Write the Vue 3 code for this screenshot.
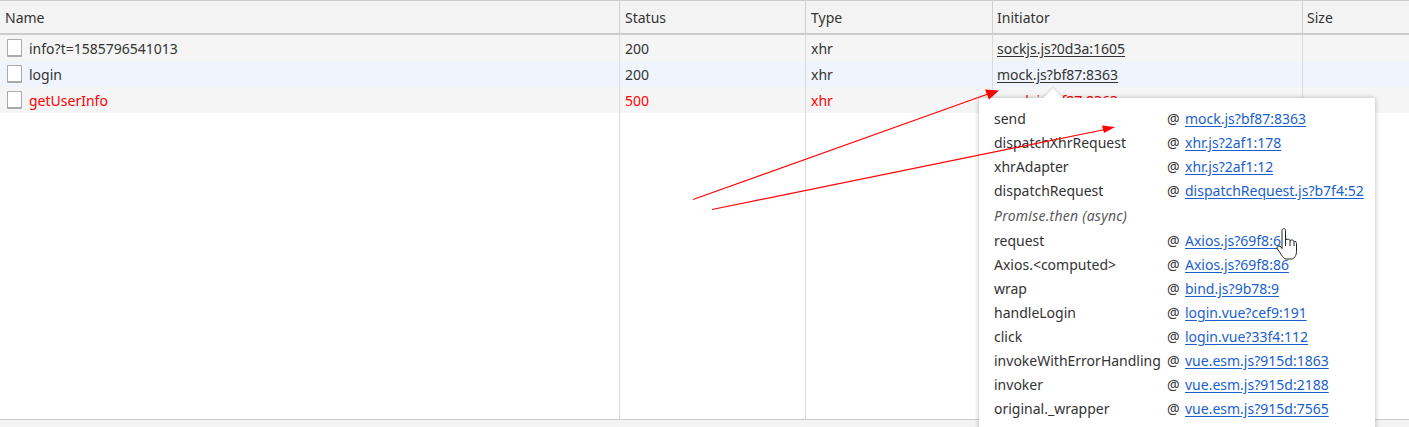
<script setup>
const columns = ['Name', 'Status', 'Type', 'Initiator', 'Size']
const rows = [
  { name: 'info?t=1585796541013', status: '200', type: 'xhr', initiator: 'sockjs.js?0d3a:1605' },
  { name: 'login', status: '200', type: 'xhr', initiator: 'mock.js?bf87:8363', selected: true },
  { name: 'getUserInfo', status: '500', type: 'xhr', initiator: 'mock.js?bf87:8363', error: true }
]
const stackA = [
  ['send', 'mock.js?bf87:8363'],
  ['dispatchXhrRequest', 'xhr.js?2af1:178'],
  ['xhrAdapter', 'xhr.js?2af1:12'],
  ['dispatchRequest', 'dispatchRequest.js?b7f4:52']
]
const stackB = [
  ['request', 'Axios.js?69f8:61'],
  ['Axios.<computed>', 'Axios.js?69f8:86'],
  ['wrap', 'bind.js?9b78:9'],
  ['handleLogin', 'login.vue?cef9:191'],
  ['click', 'login.vue?33f4:112'],
  ['invokeWithErrorHandling', 'vue.esm.js?915d:1863'],
  ['invoker', 'vue.esm.js?915d:2188'],
  ['original._wrapper', 'vue.esm.js?915d:7565']
]
</script>

<template>
  <div class="page">
    <div class="row head">
      <div v-for="c in columns" :key="c" class="cell">{{ c }}</div>
    </div>
    <div
      v-for="r in rows"
      :key="r.name"
      class="row item"
      :class="{ selected: r.selected, error: r.error }"
    >
      <div class="cell namecell">
        <span class="file"></span>
        <span>{{ r.name }}</span>
      </div>
      <div class="cell">{{ r.status }}</div>
      <div class="cell">{{ r.type }}</div>
      <div class="cell"><span class="init">{{ r.initiator }}</span></div>
      <div class="cell"></div>
    </div>
    <div class="row filler">
      <div class="cell"></div>
      <div class="cell"></div>
      <div class="cell"></div>
      <div class="cell"></div>
      <div class="cell"></div>
    </div>
    <div class="foot"></div>

    <div class="popover">
      <div class="tip"></div>
      <div class="stack">
        <template v-for="s in stackA" :key="s[0]">
          <span class="fn">{{ s[0] }}</span>
          <span class="at">@</span>
          <a class="link">{{ s[1] }}</a>
        </template>
        <div class="async">Promise.then (async)</div>
        <template v-for="s in stackB" :key="s[0]">
          <span class="fn">{{ s[0] }}</span>
          <span class="at">@</span>
          <a class="link">{{ s[1] }}</a>
        </template>
      </div>
    </div>

    <svg class="overlay" width="1409" height="427" viewBox="0 0 1409 427">
      <line x1="693" y1="199.500" x2="988" y2="94" stroke="#f00" stroke-width="1.200" />
      <polygon points="999,90.500 985,89.500 989,99.500" fill="#f00" />
      <line x1="712" y1="209.500" x2="1105" y2="129.500" stroke="#f00" stroke-width="1.200" />
      <polygon points="1115,127 1102,125.500 1104,133" fill="#f00" />
      <path
        d="M1282 230.500c0-2.500 3.500-2.500 3.500 0v9.500c2-1.500 4-1 4.500 .5c1.500-1 3.500-.5 4 1c1.500-.5 2.500 .5 2.500 2v8c0 4-2.500 7.500-5 7.500h-5c-2.500 0-3.500-2-5-4l-4-6c-1.500-2.500 1.500-4 3.500-2l1 1.500z"
        fill="#fff"
        stroke="#222"
        stroke-width="1"
      />
      <path d="M1285.500 240v6M1290 240.500v5.500M1294 241.500v4.500" stroke="#222" stroke-width="1" fill="none" />
    </svg>
  </div>
</template>

<style scoped>
.page {
  position: relative;
  width: 1409px;
  height: 427px;
  overflow: hidden;
  display: flex;
  flex-direction: column;
  background: #fff;
  font-family: "Noto Sans", "Open Sans", sans-serif;
  font-size: 14px;
  color: #333;
}
.row {
  display: grid;
  grid-template-columns: 620px 186px 187px 310px 1fr;
}
.cell {
  padding-left: 5px;
  border-right: 1px solid #dcdcdc;
  white-space: nowrap;
  display: flex;
  align-items: center;
  min-width: 0;
  overflow: hidden;
}
.cell:nth-child(n + 4) {
  padding-left: 4px;
}
.cell:last-child {
  border-right: none;
}
.head {
  height: 35px;
  flex: none;
  box-sizing: border-box;
  background: #f3f3f3;
  border-top: 1px solid #ccc;
  border-bottom: 2px solid #ccc;
  color: #333;
}
.head .cell {
  border-right-color: #d0d0d0;
}
.item {
  height: 26px;
  flex: none;
  background: #f5f5f5;
}
.item.selected {
  background: #f0f5fd;
}
.item.error {
  color: #f00;
}
.namecell {
  gap: 7px;
  padding-left: 7px;
}
.file {
  width: 15px;
  height: 18px;
  box-sizing: border-box;
  flex: none;
  background: #fff;
  border: 1px solid #aaa;
  border-bottom-width: 2px;
  border-radius: 1px;
}
.init {
  text-decoration: underline;
  text-underline-offset: 2px;
}
.filler {
  flex: 1;
}
.foot {
  height: 8px;
  flex: none;
  box-sizing: border-box;
  background: #f3f3f3;
  border-top: 1px solid #ccc;
}
.popover {
  position: absolute;
  left: 979px;
  top: 98px;
  width: 396px;
  height: 340px;
  background: #fff;
  border-radius: 2px;
  box-shadow: 0 0 5px rgba(0, 0, 0, 0.28);
  box-sizing: border-box;
  padding: 8px 0 0 15px;
}
.tip {
  position: absolute;
  left: 67px;
  top: -7px;
  width: 14px;
  height: 14px;
  background: #fff;
  transform: rotate(45deg);
  box-shadow: -1px -1px 2px rgba(0, 0, 0, 0.12);
}
.stack {
  position: relative;
  display: grid;
  grid-template-columns: 173px 18px auto;
  grid-template-rows: repeat(4, 24px) 26px repeat(8, 24px);
  align-items: center;
  justify-content: start;
}
.fn,
.at {
  white-space: nowrap;
}
.link {
  color: #1a5fd0;
  text-decoration: underline;
  text-underline-offset: 2px;
  white-space: nowrap;
}
.async {
  grid-column: 1 / -1;
  font-style: italic;
  font-size: 14px;
  letter-spacing: 0.25px;
  color: #5a5a5a;
}
.overlay {
  position: absolute;
  left: 0;
  top: 0;
  pointer-events: none;
}
</style>
